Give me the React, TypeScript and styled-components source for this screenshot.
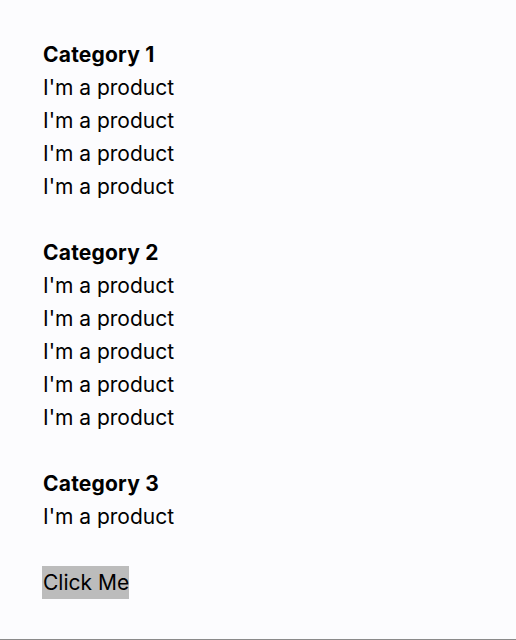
import styled, { createGlobalStyle } from 'styled-components'

const GlobalStyle = createGlobalStyle`
  html, body {
    margin: 0;
    padding: 0;
    background: #fcfcfe;
  }
  body {
    font-family: Inter, "Noto Sans", sans-serif;
    color: #000;
  }
`

const Page = styled.div`
  box-sizing: border-box;
  height: 640px;
  padding: 38px 42px 0 43px;
  border-bottom: 1px solid #8a8a8a;
  font-size: 21px;
  line-height: 33px;
`

const Category = styled.section`
  margin-bottom: 33px;
`

const Heading = styled.div`
  font-weight: 700;
  letter-spacing: 0.2px;
`

const Product = styled.div`
  font-weight: 400;
`

const Button = styled.button`
  display: block;
  margin: 0 0 0 -1px;
  padding: 0 0 0 1px;
  border: none;
  background: #bcbcbc;
  font: inherit;
  line-height: 33px;
  color: #000;
`

const categories = [
  { name: 'Category 1', count: 4 },
  { name: 'Category 2', count: 5 },
  { name: 'Category 3', count: 1 },
]

function App() {
  return (
    <>
      <GlobalStyle />
      <Page>
        {categories.map((c) => (
          <Category key={c.name}>
            <Heading>{c.name}</Heading>
            {Array.from({ length: c.count }).map((_, i) => (
              <Product key={i}>I'm a product</Product>
            ))}
          </Category>
        ))}
        <Button>Click Me</Button>
      </Page>
    </>
  )
}

export default App
